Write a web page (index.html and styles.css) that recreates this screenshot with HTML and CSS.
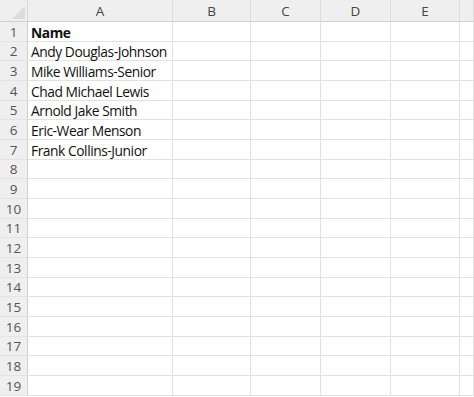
FILE: index.html
```html
<!DOCTYPE html>
<html lang="en">
<head>
  <meta charset="UTF-8" />
  <meta name="viewport" content="width=device-width, initial-scale=1.0" />
  <title>Names</title>
  <link rel="stylesheet" href="styles.css">
</head>
<body>
  <div class="sheet" id="sheet"></div>

  <script>
    const columns = ["A", "B", "C", "D", "E", ""];
    const names = [
      "Name",
      "Andy Douglas-Johnson",
      "Mike Williams-Senior",
      "Chad Michael Lewis",
      "Arnold Jake Smith",
      "Eric-Wear Menson",
      "Frank Collins-Junior"
    ];

    const sheet = document.getElementById("sheet");

    // corner cell with the select-all triangle
    const corner = document.createElement("div");
    corner.classList.add("corner");
    corner.innerHTML = '<svg width="13" height="13" viewBox="0 0 13 13"><polygon points="13,0 13,13 0,13" fill="#dcdcdc"/></svg>';
    sheet.appendChild(corner);

    for (let c = 0; c < columns.length; c++) {
      const head = document.createElement("div");
      head.classList.add("col-head");
      head.textContent = columns[c];
      sheet.appendChild(head);
    }

    for (let r = 1; r <= 19; r++) {
      const num = document.createElement("div");
      num.classList.add("row-head");
      num.textContent = r;
      sheet.appendChild(num);

      for (let c = 0; c < columns.length; c++) {
        const cell = document.createElement("div");
        cell.classList.add("cell");
        if (c === 0 && names[r - 1]) {
          cell.textContent = names[r - 1];
          if (r === 1) cell.classList.add("bold");
        }
        sheet.appendChild(cell);
      }
    }
  </script>
</body>
</html>
```

FILE: styles.css
```css
body {
  margin: 0;
  padding: 0;
  background-color: #fff;
  font-family: "Open Sans", "Noto Sans", sans-serif;
  overflow: hidden;
}

.sheet {
  display: grid;
  grid-template-columns: 28px 145px 78px 70px 70px 69px 1fr;
  grid-template-rows: 22px repeat(19, 19.68px);
  width: 474px;
}

.corner {
  background-color: #efefef;
  border-bottom: 1px solid #cfcfcf;
  border-right: 1px solid #d6d6d6;
  display: flex;
  align-items: flex-end;
  justify-content: flex-end;
  padding: 0 2px 2px 0;
}

.col-head {
  background-color: #efefef;
  border-bottom: 1px solid #cfcfcf;
  border-right: 1px solid #dcdcdc;
  color: #444;
  font-size: 13.5px;
  display: flex;
  align-items: center;
  justify-content: center;
}

.row-head {
  background-color: #efefef;
  border-right: 1px solid #cfcfcf;
  border-bottom: 1px solid #e4e4e4;
  color: #555;
  font-size: 13.5px;
  display: flex;
  align-items: flex-end;
  justify-content: center;
  line-height: 18px;
}

.cell {
  border-right: 1px solid #e2e2e2;
  border-bottom: 1px solid #e2e2e2;
  color: #111;
  font-size: 13.8px;
  letter-spacing: -0.45px;
  line-height: 17px;
  white-space: nowrap;
  display: flex;
  align-items: flex-end;
  padding: 0 0 0 3px;
  min-width: 0;
}

.bold {
  font-weight: bold;
}
```
